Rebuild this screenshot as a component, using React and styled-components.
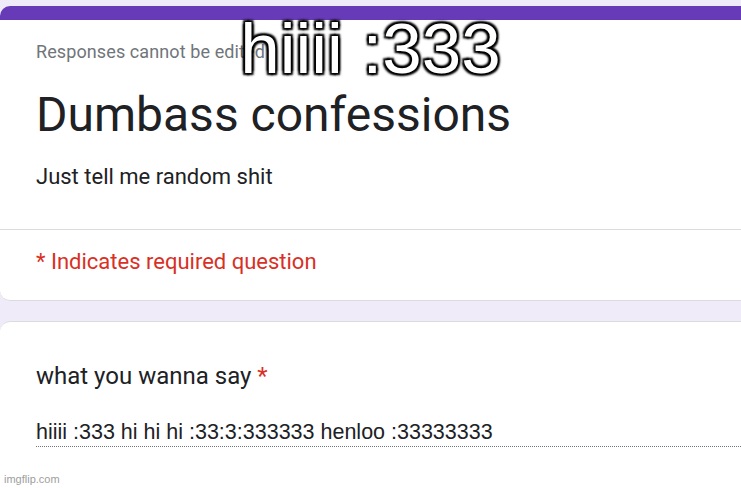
import React from 'react';
import styled, { createGlobalStyle } from 'styled-components';

const Global = createGlobalStyle`
  html, body {
    margin: 0;
    padding: 0;
    background: #f0ebf8;
    overflow: hidden;
  }
  body {
    font-family: Roboto, 'Noto Sans', sans-serif;
  }
`

const Page = styled.main`
  position: relative;
  width: 741px;
  height: 488px;
  padding-top: 6px;
  box-sizing: border-box;
  overflow: hidden;
  background: #f0ebf8;
`

const Card = styled.section`
  width: 780px;
  background: #fff;
  border: 1px solid #dadce0;
  border-radius: 10px;
  box-sizing: border-box;
  overflow: hidden;
  ${p => p.$accent && `
    border-top: 14px solid #673ab7;
    border-left: 0;
  `}
  ${p => p.$last && `
    margin-top: 20px;
    border-left: 0;
  `}
`

const Header = styled.div`
  padding: 20px 36px 38px;
  border-bottom: 1px solid #dadce0;
`

const Note = styled.div`
  font-size: 18px;
  line-height: 24px;
  color: #70757a;
  letter-spacing: 0.1px;
`

const Title = styled.h1`
  margin: 23px 0 0;
  font-size: 48px;
  line-height: 56px;
  font-weight: 400;
  color: #202124;
`

const Desc = styled.p`
  margin: 20px 0 0;
  font-size: 22px;
  line-height: 28px;
  color: #202124;
`

const Required = styled.div`
  padding: 18px 36px 24px;
  font-size: 22px;
  line-height: 28px;
  color: #d93025;
`

const Question = styled.div`
  padding: 39px 36px 60px;
`

const Label = styled.div`
  font-size: 24px;
  line-height: 30px;
  color: #202124;

  span {
    color: #d93025;
  }
`

const Answer = styled.div`
  margin-top: 29px;
  padding-bottom: 2px;
  font-family: 'Liberation Sans', Arial, sans-serif;
  font-size: 21.5px;
  line-height: 24px;
  color: #202124;
  border-bottom: 1px dotted #70757a;
`

const Caption = styled.div`
  position: absolute;
  top: 4px;
  left: 0;
  right: 0;
  text-align: center;
  font-family: 'Liberation Sans', Arial, sans-serif;
  font-size: 71px;
  line-height: 90px;
  color: #fff;
  text-shadow:
    2px 2px 2px #000, -2px -2px 2px #000, 2px -2px 2px #000, -2px 2px 2px #000,
    0 0 4px #000;
`

const Watermark = styled.div`
  position: absolute;
  left: 4px;
  bottom: 3px;
  font-family: 'Liberation Sans', Arial, sans-serif;
  font-size: 11px;
  color: #9e9e9e;
`

export default function App() {
  return (
    <>
      <Global />
      <Page>
        <Card $accent>
          <Header>
            <Note>Responses cannot be edited</Note>
            <Title>Dumbass confessions</Title>
            <Desc>Just tell me random shit</Desc>
          </Header>
          <Required>* Indicates required question</Required>
        </Card>
        <Card $last>
          <Question>
            <Label>what you wanna say <span>*</span></Label>
            <Answer>hiiii :333 hi hi hi :33:3:333333 henloo :33333333</Answer>
          </Question>
        </Card>
        <Caption>hiiii :333</Caption>
        <Watermark>imgflip.com</Watermark>
      </Page>
    </>
  );
}
